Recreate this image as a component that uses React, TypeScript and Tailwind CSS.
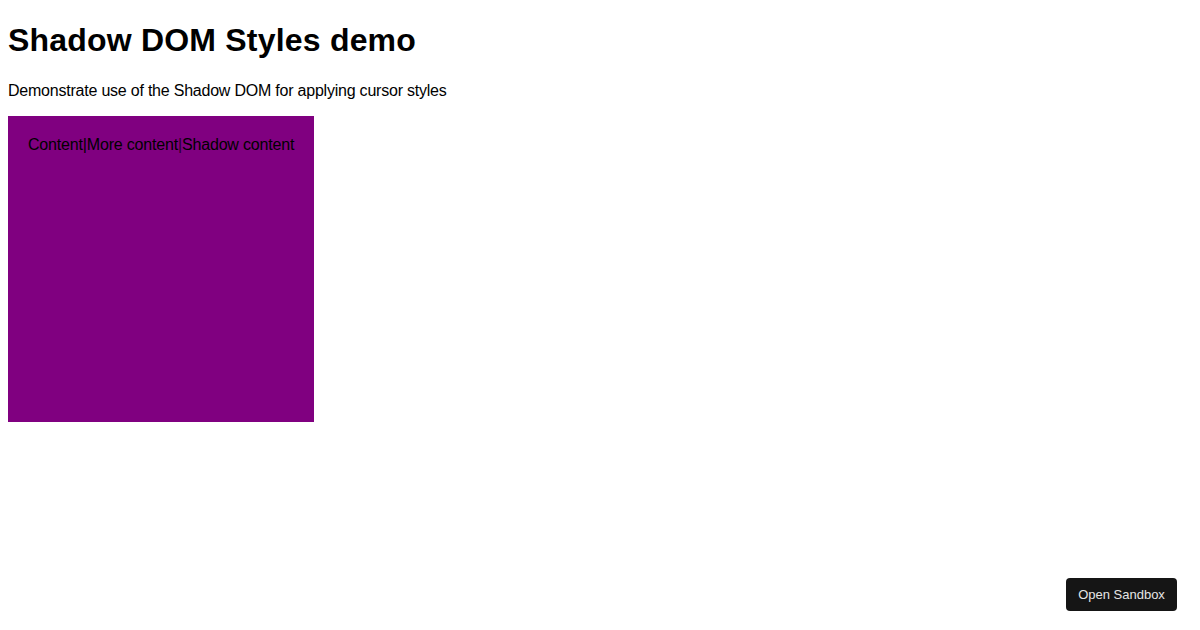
export default function App() {
  return (
    <div className="min-h-[630px] px-2 font-['Liberation_Sans',Arial,sans-serif] text-black">
      <h1 className="pt-[22px] text-[32px] font-bold leading-[37px] tracking-[0.2px]">Shadow DOM Styles demo</h1>
      <p className="mt-[23px] text-base leading-[18px] tracking-[-0.22px]">
        Demonstrate use of the Shadow DOM for applying cursor styles
      </p>
      <div className="mt-4 h-[306px] w-[306px] whitespace-nowrap bg-[#800080] p-5 text-base leading-[18px] tracking-[-0.18px]">
        <span>Content</span>
        <span>|</span>
        <span>More content</span>
        <span className="opacity-70">|</span>
        <span>Shadow content</span>
      </div>
      <button className="fixed bottom-[19px] right-[23px] h-[33px] w-[111px] rounded-[4px] bg-[#151515] text-[13px] text-[#e5e5e5]">
        Open Sandbox
      </button>
    </div>
  );
}
